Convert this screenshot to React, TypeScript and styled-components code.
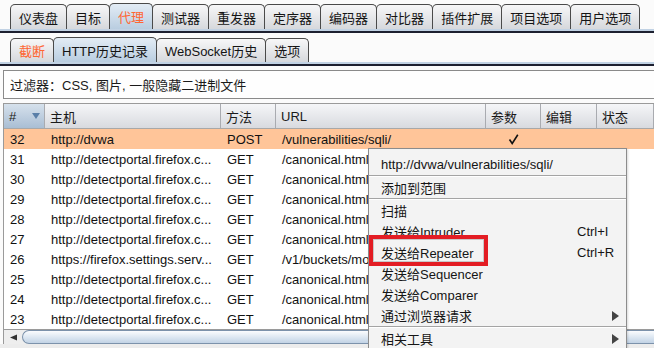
import styled, { createGlobalStyle, css } from "styled-components";
import React from "react";

const GlobalStyle = createGlobalStyle`
  html, body {
    margin: 0;
    padding: 0;
    background: #fbfbfb;
  }
  body {
    font-family: "Liberation Sans", "Noto Sans CJK SC", sans-serif;
    font-size: 13px;
    color: #111;
  }
`;

const StyledRoot = styled.div`
  position: relative;
  width: 654px;
  height: 348px;
  overflow: hidden;
  display: flex;
  flex-direction: column;
  background: #fbfbfb;
`;

const StyledTabBar = styled.div<{ $height: number; $top?: number }>`
  display: flex;
  align-items: flex-end;
  height: ${({ $height }) => $height}px;
  margin-top: ${({ $top }) => $top ?? 0}px;
  padding-left: 10px;
  box-sizing: border-box;
`;

const StyledTab = styled.div<{ $active?: boolean; $accent?: boolean; $height: number }>`
  height: ${({ $height }) => $height}px;
  padding: 0 8px;
  margin-right: -1px;
  display: flex;
  align-items: center;
  box-sizing: border-box;
  border: 1px solid #4a4a4a;
  border-bottom: none;
  border-radius: 5px 5px 0 0;
  background: linear-gradient(#f7f7f8, #d6d8dc);
  color: ${({ $accent }) => ($accent ? "#ff6633" : "#141414")};
  white-space: nowrap;
  ${({ $active, $height }) =>
    $active &&
    css`
      height: ${$height + 1}px;
      background: linear-gradient(#e3ecf5, #b9cde0);
      position: relative;
      z-index: 1;
    `}
`;

const StyledRule = styled.div`
  height: 2px;
  background: #c1d2e4;
  border-bottom: 2px solid #1d2030;
  flex-shrink: 0;
`;

const StyledFilter = styled.div`
  margin: 4px 0 0 3px;
  height: 29px;
  box-sizing: border-box;
  border: 1px solid #8a8a8a;
  border-right: none;
  background: #fefefe;
  display: flex;
  align-items: center;
  padding-left: 6px;
  color: #1a1a1a;
`;

const StyledTable = styled.div`
  margin: 4px 0 0 3px;
  border-left: 1px solid #9a9a9a;
  display: flex;
  flex-direction: column;
  background: #fff;
`;

const COLUMNS = "41px 176px 55px 210px 55px 56px 1fr";

const StyledHeader = styled.div`
  display: grid;
  grid-template-columns: ${COLUMNS};
  height: 26px;
  box-sizing: border-box;
  border-top: 1px solid #9a9a9a;
  border-bottom: 1px solid #a8a8a8;
  background: linear-gradient(#f5f6f8, #d8dadf);
`;

const StyledHeadCell = styled.div<{ $sorted?: boolean }>`
  display: flex;
  align-items: center;
  justify-content: space-between;
  padding: 0 4px 0 5px;
  border-right: 1px solid #a9abb0;
  color: #1a1a1a;
  ${({ $sorted }) =>
    $sorted &&
    css`
      background: linear-gradient(#d6e1ec, #a9bed4);
    `}
`;

const StyledRow = styled.div<{ $selected?: boolean }>`
  display: grid;
  grid-template-columns: ${COLUMNS};
  height: 20px;
  align-items: center;
  background: ${({ $selected }) => ($selected ? "#ffc599" : "#fff")};
`;

const StyledCell = styled.div<{ $center?: boolean }>`
  padding-left: 6px;
  white-space: nowrap;
  overflow: hidden;
  display: flex;
  align-items: center;
  justify-content: ${({ $center }) => ($center ? "center" : "flex-start")};
  ${({ $center }) => $center && "padding-left: 0;"}
`;

const StyledScrollbar = styled.div`
  display: flex;
  height: 15px;
  border-top: 1px solid #9a9a9a;
  background: #eeeeee;
  box-sizing: border-box;
`;

const StyledScrollArrow = styled.div`
  width: 18px;
  display: flex;
  align-items: center;
  justify-content: center;
`;

const StyledThumb = styled.div`
  flex: 1;
  border: 1px solid #7c92ab;
  border-right: none;
  border-radius: 9px 0 0 9px;
  background: linear-gradient(#fbfcfe, #dbe6f1 55%, #c2d3e5);
`;

const StyledFooter = styled.div`
  flex: 1;
  background: #ececec;
`;

const StyledMenu = styled.div`
  position: absolute;
  left: 368px;
  top: 148px;
  width: 259px;
  box-sizing: border-box;
  border: 1px solid #8c8c8c;
  padding-top: 5px;
  background: #f3f3f3;
  box-shadow: 1px 1px 2px rgba(0, 0, 0, 0.15);
  z-index: 5;
`;

const StyledMenuItem = styled.div<{ $marked?: boolean }>`
  position: relative;
  height: 21px;
  display: flex;
  align-items: center;
  padding-left: 12px;
  color: #151515;
  white-space: nowrap;
  ${({ $marked }) =>
    $marked &&
    css`
      &::after {
        content: "";
        position: absolute;
        left: 0;
        top: -7px;
        width: 119px;
        height: 31px;
        box-sizing: border-box;
        border: 4px solid #e31d24;
        box-shadow: inset 0 0 0 1px #c8c8c8;
      }
    `}
`;

const StyledLabel = styled.span`
  flex: 1;
`;

const StyledShortcut = styled.span`
  width: 49px;
`;

const StyledSubArrow = styled.span`
  display: flex;
  margin-right: 7px;
`;

const StyledSeparator = styled.div`
  height: 1px;
  background: #a4a4a4;
  border-bottom: 1px solid #ffffff;
`;

const topTabs = ["仪表盘", "目标", "代理", "测试器", "重发器", "定序器", "编码器", "对比器", "插件扩展", "项目选项", "用户选项"];
const subTabs = ["截断", "HTTP历史记录", "WebSocket历史", "选项"];

const portal = "http://detectportal.firefox.c...";
const rows = [
  { id: 32, host: "http://dvwa", method: "POST", url: "/vulnerabilities/sqli/", params: true },
  { id: 31, host: portal, method: "GET", url: "/canonical.html" },
  { id: 30, host: portal, method: "GET", url: "/canonical.html" },
  { id: 29, host: portal, method: "GET", url: "/canonical.html" },
  { id: 28, host: portal, method: "GET", url: "/canonical.html" },
  { id: 27, host: portal, method: "GET", url: "/canonical.html" },
  { id: 26, host: "https://firefox.settings.serv...", method: "GET", url: "/v1/buckets/monitor/collections" },
  { id: 25, host: portal, method: "GET", url: "/canonical.html" },
  { id: 24, host: portal, method: "GET", url: "/canonical.html" },
  { id: 23, host: portal, method: "GET", url: "/canonical.html" },
];

const Check = () => (
  <svg width="11" height="11" viewBox="0 0 11 11">
    <path d="M1.5 5.5 L4.2 9.5 L9.8 0.8" fill="none" stroke="#111" strokeWidth="1.6" />
  </svg>
);

const SortDown = () => (
  <svg width="8" height="6" viewBox="0 0 8 6">
    <polygon points="0,0 8,0 4,6" fill="#5a7fa8" />
  </svg>
);

const LeftArrow = () => (
  <svg width="7" height="7" viewBox="0 0 7 7">
    <polygon points="0,3.5 7,0.5 7,6.5" fill="#333" />
  </svg>
);

const RightArrow = () => (
  <svg width="7" height="10" viewBox="0 0 7 10">
    <polygon points="0,0 7,5 0,10" fill="#444" />
  </svg>
);

const App = () => {
  return (
    <>
      <GlobalStyle />
      <StyledRoot>
        <StyledTabBar $height={29}>
          {topTabs.map((t) => (
            <StyledTab key={t} $height={25} $active={t === "代理"} $accent={t === "代理"}>
              {t}
            </StyledTab>
          ))}
        </StyledTabBar>
        <StyledRule />
        <StyledTabBar $height={24} $top={5}>
          {subTabs.map((t) => (
            <StyledTab key={t} $height={24} $active={t === "HTTP历史记录"} $accent={t === "截断"}>
              {t}
            </StyledTab>
          ))}
        </StyledTabBar>
        <StyledRule />
        <StyledFilter>过滤器：CSS, 图片, 一般隐藏二进制文件</StyledFilter>
        <StyledTable>
          <StyledHeader>
            <StyledHeadCell $sorted>
              # <SortDown />
            </StyledHeadCell>
            <StyledHeadCell>主机</StyledHeadCell>
            <StyledHeadCell>方法</StyledHeadCell>
            <StyledHeadCell>URL</StyledHeadCell>
            <StyledHeadCell>参数</StyledHeadCell>
            <StyledHeadCell>编辑</StyledHeadCell>
            <StyledHeadCell>状态</StyledHeadCell>
          </StyledHeader>
          {rows.map((r, i) => (
            <StyledRow key={r.id} $selected={i === 0}>
              <StyledCell>{r.id}</StyledCell>
              <StyledCell>{r.host}</StyledCell>
              <StyledCell>{r.method}</StyledCell>
              <StyledCell>{r.url}</StyledCell>
              <StyledCell $center>{r.params && <Check />}</StyledCell>
              <StyledCell />
              <StyledCell />
            </StyledRow>
          ))}
          <StyledScrollbar>
            <StyledScrollArrow>
              <LeftArrow />
            </StyledScrollArrow>
            <StyledThumb />
          </StyledScrollbar>
        </StyledTable>
        <StyledFooter />

        <StyledMenu>
          <StyledMenuItem>
            <StyledLabel>http://dvwa/vulnerabilities/sqli/</StyledLabel>
          </StyledMenuItem>
          <StyledSeparator />
          <StyledMenuItem>
            <StyledLabel>添加到范围</StyledLabel>
          </StyledMenuItem>
          <StyledSeparator />
          <StyledMenuItem>
            <StyledLabel>扫描</StyledLabel>
          </StyledMenuItem>
          <StyledMenuItem>
            <StyledLabel>发送给Intruder</StyledLabel>
            <StyledShortcut>Ctrl+I</StyledShortcut>
          </StyledMenuItem>
          <StyledMenuItem $marked>
            <StyledLabel>发送给Repeater</StyledLabel>
            <StyledShortcut>Ctrl+R</StyledShortcut>
          </StyledMenuItem>
          <StyledMenuItem>
            <StyledLabel>发送给Sequencer</StyledLabel>
          </StyledMenuItem>
          <StyledMenuItem>
            <StyledLabel>发送给Comparer</StyledLabel>
          </StyledMenuItem>
          <StyledMenuItem>
            <StyledLabel>通过浏览器请求</StyledLabel>
            <StyledSubArrow>
              <RightArrow />
            </StyledSubArrow>
          </StyledMenuItem>
          <StyledSeparator />
          <StyledMenuItem>
            <StyledLabel>相关工具</StyledLabel>
            <StyledSubArrow>
              <RightArrow />
            </StyledSubArrow>
          </StyledMenuItem>
        </StyledMenu>
      </StyledRoot>
    </>
  );
};

export default App;
